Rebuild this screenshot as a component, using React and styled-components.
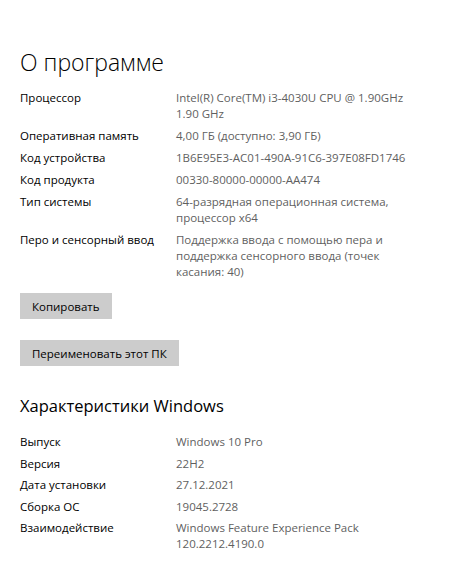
import React from 'react';
import styled, { createGlobalStyle } from 'styled-components';

const GlobalStyle = createGlobalStyle`
  body {
    margin: 0;
    background: #ffffff;
    font-family: "Open Sans", "Noto Sans", sans-serif;
  }
`;

const Page = styled.div`
  padding: 46px 20px 0 20px;
  color: #000;
`;

const Title = styled.h1`
  font-size: 23px;
  font-weight: 300;
  line-height: 32px;
  margin: 0 0 12px 0;
`;

const Subtitle = styled.h2`
  font-size: 16.5px;
  font-weight: 400;
  line-height: 24px;
  margin: 0 0 16px 0;
`;

const Specs = styled.div`
  display: grid;
  grid-template-columns: 156px 1fr;
  row-gap: ${(p) => p.gap}px;
  font-size: 11.5px;
  line-height: 16px;
`;

const Label = styled.div`
  color: #000;
`;

const Value = styled.div`
  color: #5f5f5f;
  white-space: pre-line;
`;

const Actions = styled.div`
  display: flex;
  flex-direction: column;
  align-items: flex-start;
  gap: 21px;
  margin: 13px 0 28px 0;
`;

const Button = styled.button`
  background: #cccccc;
  border: none;
  border-radius: 0;
  height: 26px;
  padding: 0 12px;
  font-family: inherit;
  font-size: 11.5px;
  color: #000;
`;

const about = [
  ['Процессор', 'Intel(R) Core(TM) i3-4030U CPU @ 1.90GHz\n1.90 GHz'],
  ['Оперативная память', '4,00 ГБ (доступно: 3,90 ГБ)'],
  ['Код устройства', '1B6E95E3-AC01-490A-91C6-397E08FD1746'],
  ['Код продукта', '00330-80000-00000-AA474'],
  ['Тип системы', '64-разрядная операционная система,\nпроцессор x64'],
  ['Перо и сенсорный ввод', 'Поддержка ввода с помощью пера и\nподдержка сенсорного ввода (точек\nкасания: 40)'],
];

const windows = [
  ['Выпуск', 'Windows 10 Pro'],
  ['Версия', '22H2'],
  ['Дата установки', '27.12.2021'],
  ['Сборка ОС', '19045.2728'],
  ['Взаимодействие', 'Windows Feature Experience Pack\n120.2212.4190.0'],
];

const SpecList = ({ items, gap = 6 }) => (
  <Specs gap={gap}>
    {items.map(([label, value]) => (
      <React.Fragment key={label}>
        <Label>{label}</Label>
        <Value>{value}</Value>
      </React.Fragment>
    ))}
  </Specs>
);

const App = () => {
  return (
    <>
      <GlobalStyle />
      <Page>
        <Title>О программе</Title>
        <SpecList items={about} />
        <Actions>
          <Button>Копировать</Button>
          <Button>Переименовать этот ПК</Button>
        </Actions>
        <Subtitle>Характеристики Windows</Subtitle>
        <SpecList items={windows} gap={5.5} />
      </Page>
    </>
  );
};

export default App;
